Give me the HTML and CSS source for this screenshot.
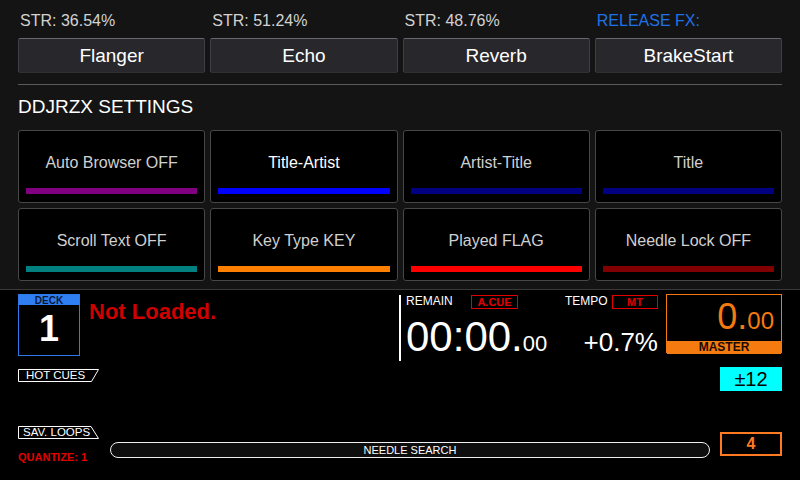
FILE: index.html
```html
<!DOCTYPE html>
<html>
<head>
<meta charset="utf-8">
<link rel="stylesheet" href="styles.css">
</head>
<body>
<div class="screen">
  <section class="top">
    <div class="fx-labels">
      <div class="fx-label">STR: 36.54%</div>
      <div class="fx-label">STR: 51.24%</div>
      <div class="fx-label">STR: 48.76%</div>
      <div class="fx-label release">RELEASE FX:</div>
    </div>
    <div class="fx-buttons">
      <div class="fx-btn">Flanger</div>
      <div class="fx-btn">Echo</div>
      <div class="fx-btn">Reverb</div>
      <div class="fx-btn">BrakeStart</div>
    </div>
    <div class="sep"></div>
    <div class="settings-title">DDJRZX SETTINGS</div>
    <div class="cards">
      <div class="card"><div class="card-text">Auto Browser OFF</div><div class="bar purple"></div></div>
      <div class="card"><div class="card-text active">Title-Artist</div><div class="bar blue"></div></div>
      <div class="card"><div class="card-text">Artist-Title</div><div class="bar navy"></div></div>
      <div class="card"><div class="card-text">Title</div><div class="bar navy"></div></div>
      <div class="card"><div class="card-text">Scroll Text OFF</div><div class="bar teal"></div></div>
      <div class="card"><div class="card-text">Key Type KEY</div><div class="bar orange"></div></div>
      <div class="card"><div class="card-text">Played FLAG</div><div class="bar red"></div></div>
      <div class="card"><div class="card-text">Needle Lock OFF</div><div class="bar maroon"></div></div>
    </div>
  </section>

  <section class="bottom">
    <div class="deck-row">
      <div class="deck-left">
        <div class="deck">
          <div class="deck-head">DECK</div>
          <div class="deck-num">1</div>
        </div>
        <div class="not-loaded">Not Loaded.</div>
      </div>
      <div class="deck-right">
        <div class="remain">
          <div class="hdr">
            <span class="hdr-label remain-label">REMAIN</span>
            <span class="flag acue">A.CUE</span>
          </div>
          <div class="time"><span class="big">00:00.</span><span class="small">00</span></div>
        </div>
        <div class="tempo">
          <div class="hdr">
            <span class="hdr-label">TEMPO</span>
            <span class="flag mt">MT</span>
          </div>
          <div class="tempo-val">+0.7%</div>
        </div>
        <div class="master">
          <div class="bpm"><span class="bpm-big">0.</span><span class="bpm-small">00</span></div>
          <div class="master-band">MASTER</div>
        </div>
      </div>
    </div>

    <div class="cue-row">
      <div class="tag hot">
        <svg class="tag-outline" width="81" height="13" viewBox="0 0 81 13"><polygon points="0.5,0.5 80.5,0.5 73.5,12.5 0.5,12.5" fill="none" stroke="#fff" stroke-width="1"/></svg>
        <span class="tag-text">HOT CUES</span>
      </div>
      <div class="range">±12</div>
    </div>

    <div class="loop-row">
      <div class="loop-left">
        <div class="tag sav">
          <svg class="tag-outline" width="81" height="13" viewBox="0 0 81 13"><polygon points="0.5,0.5 73,0.5 80.5,12.5 0.5,12.5" fill="none" stroke="#fff" stroke-width="1"/></svg>
          <span class="tag-text">SAV. LOOPS</span>
        </div>
        <div class="quantize">QUANTIZE: 1</div>
      </div>
      <div class="needle">NEEDLE SEARCH</div>
      <div class="beat">4</div>
    </div>
  </section>
</div>
</body>
</html>
```

FILE: styles.css
```css
* { box-sizing: border-box; }
html, body {
  margin: 0;
  padding: 0;
  background: #000;
}
body {
  width: 800px;
  height: 480px;
  overflow: hidden;
  font-family: "Liberation Sans", Arial, sans-serif;
  color: #fff;
}
.screen {
  width: 800px;
  height: 480px;
  display: flex;
  flex-direction: column;
}

/* ---------- top ---------- */
.top {
  background: #141414;
  height: 290px;
  padding: 0 18px;
  border-bottom: 1px solid #3a3a3a;
  display: flex;
  flex-direction: column;
}
.fx-labels, .fx-buttons {
  display: grid;
  grid-template-columns: repeat(4, 1fr);
  column-gap: 5px;
}
.fx-labels {
  margin-top: 12px;
  font-size: 16px;
  line-height: 18px;
  color: #d2d2d2;
}
.fx-label { padding-left: 2px; }
.fx-label.release { color: #1f72e6; }
.fx-buttons { margin-top: 8px; }
.fx-btn {
  height: 35px;
  background: #28272c;
  border: 1px solid #404044;
  border-top-color: #68686c;
  border-bottom-color: #303034;
  border-radius: 2px;
  display: flex;
  align-items: center;
  justify-content: center;
  padding-top: 1px;
  font-size: 19px;
  color: #fff;
}
.sep {
  margin-top: 11px;
  height: 1px;
  background: #5a5a5a;
}
.settings-title {
  margin-top: 11px;
  font-size: 19px;
  line-height: 22px;
  color: #fff;
}
.cards {
  margin-top: 12px;
  display: grid;
  grid-template-columns: repeat(4, 1fr);
  grid-auto-rows: 73px;
  gap: 5px;
}
.card {
  background: #000;
  border: 1px solid #474747;
  border-radius: 3px;
  padding: 23px 7px 8px 7px;
  display: flex;
  flex-direction: column;
}
.card-text {
  font-size: 16px;
  line-height: 18px;
  text-align: center;
  color: #d0d0d0;
}
.card-text.active { color: #fff; }
.bar {
  margin-top: 16px;
  height: 6px;
}
.purple { background: #800080; }
.blue { background: #0000ff; }
.navy { background: #000080; }
.teal { background: #008080; }
.orange { background: #ff8000; }
.red { background: #ff0000; }
.maroon { background: #800000; }

/* ---------- bottom ---------- */
.bottom {
  flex: 1;
  background: #000;
  padding: 4px 18px 0 18px;
  display: flex;
  flex-direction: column;
}
.deck-row {
  display: grid;
  grid-template-columns: 381px 1fr;
  height: 67px;
}
.deck-left {
  display: flex;
  align-items: flex-start;
}
.deck {
  width: 62px;
  height: 62px;
  border: 1px solid #2d7ae8;
  display: flex;
  flex-direction: column;
}
.deck-head {
  height: 10px;
  background: #2f7ff2;
  color: #0c1838;
  font-size: 10px;
  font-weight: bold;
  line-height: 11px;
  text-align: center;
}
.deck-num {
  flex: 1;
  display: flex;
  align-items: center;
  justify-content: center;
  font-size: 36px;
  font-weight: bold;
  line-height: 1;
  color: #fff;
  padding-bottom: 2px;
}
.not-loaded {
  margin-left: 9px;
  margin-top: 5px;
  font-size: 22px;
  line-height: 26px;
  font-weight: bold;
  color: #cf0000;
}
.deck-right {
  display: flex;
  align-items: flex-start;
}
.remain {
  width: 166px;
  height: 66px;
  margin-top: 1px;
  border-left: 2px solid #fff;
  padding-left: 5px;
}
.hdr {
  display: flex;
  align-items: flex-start;
  height: 14px;
}
.hdr-label {
  font-size: 12px;
  line-height: 13px;
  color: #fff;
}
.remain-label { width: 65px; }
.flag {
  height: 14px;
  border: 1px solid #e00000;
  color: #e00000;
  font-size: 11px;
  font-weight: bold;
  line-height: 12px;
  text-align: center;
}
.acue { width: 47px; }
.mt { width: 46px; margin-left: auto; }
.time {
  margin-top: 7px;
  display: flex;
  align-items: baseline;
  line-height: 42px;
}
.time .big { font-size: 42px; }
.time .small { font-size: 22px; }
.tempo {
  width: 93px;
  margin-top: 1px;
}
.tempo-val {
  margin-top: 18px;
  font-size: 26px;
  line-height: 30px;
  text-align: right;
  color: #fff;
}
.master {
  width: 116px;
  height: 59px;
  margin-left: 8px;
  border: 1px solid #f47a10;
  display: flex;
  flex-direction: column;
}
.bpm {
  padding: 2px 7px 0 0;
  display: flex;
  justify-content: flex-end;
  align-items: baseline;
  line-height: 40px;
  color: #f57a10;
}
.bpm-big { font-size: 36px; }
.bpm-small { font-size: 24px; }
.master-band {
  margin-top: auto;
  height: 13px;
  background: #f57a10;
  color: #1a0c00;
  font-size: 12px;
  font-weight: bold;
  line-height: 13px;
  text-align: center;
}

.cue-row {
  margin-top: 6px;
  display: flex;
  justify-content: space-between;
  align-items: flex-start;
}
.tag {
  position: relative;
  width: 81px;
  height: 13px;
  font-size: 11.5px;
  line-height: 13px;
  color: #fff;
}
.tag-outline {
  position: absolute;
  left: 0;
  top: 0;
}
.tag-text { position: relative; }
.hot { margin-top: 2px; padding-left: 8px; }
.sav { padding-left: 5px; }
.range {
  width: 62px;
  height: 24px;
  background: #00ffff;
  color: #000;
  font-size: 20px;
  line-height: 24px;
  text-align: center;
}

.loop-row {
  margin-top: 35px;
  display: flex;
  align-items: flex-start;
}
.loop-left {
  width: 92px;
}
.quantize {
  margin-top: 12px;
  font-size: 11px;
  line-height: 13px;
  font-weight: bold;
  color: #e00000;
}
.needle {
  width: 600px;
  height: 16px;
  margin-top: 16px;
  border: 1px solid #f0f0f0;
  border-radius: 8px;
  background: #0e0e0e;
  font-size: 11px;
  line-height: 14px;
  text-align: center;
  color: #fff;
}
.beat {
  width: 62px;
  height: 24px;
  margin-left: 10px;
  margin-top: 6px;
  border: 2px solid #ff7a20;
  color: #ff7a20;
  font-size: 16px;
  font-weight: bold;
  line-height: 20px;
  text-align: center;
}
```
